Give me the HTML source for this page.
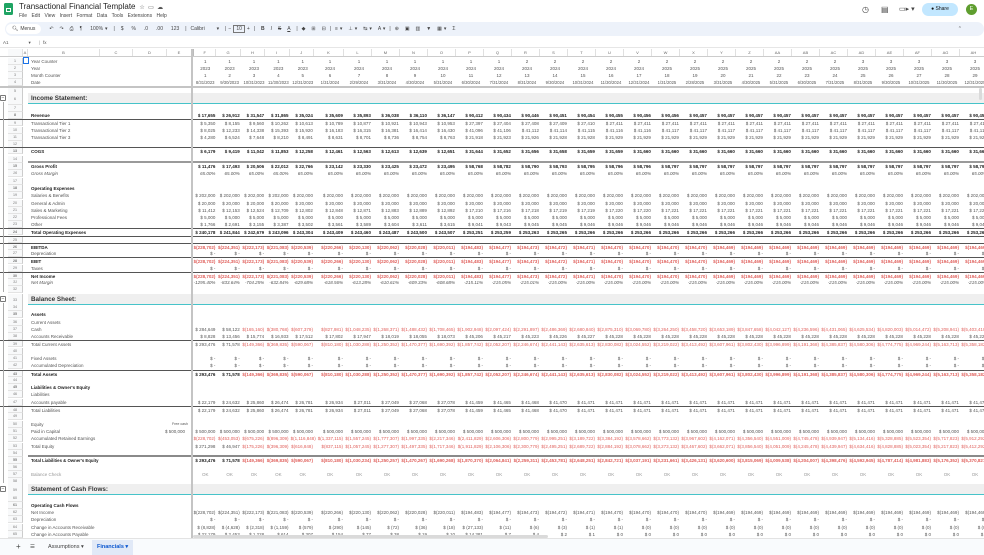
<!DOCTYPE html>
<html><head><meta charset="utf-8"><style>
*{margin:0;padding:0;box-sizing:border-box}
body{width:984px;height:555px;overflow:hidden;background:#fff;font-family:"Liberation Sans",Arial,sans-serif;color:#3c3c3c;position:relative}
.abs{position:absolute}
.title{left:19px;top:2px;font-size:8px;color:#1f1f1f}
.menu{left:19px;top:13px;font-size:5px;color:#444;word-spacing:3px}
.tb{left:5px;top:22px;width:979px;height:14px;background:#edf2fa;border-radius:7px;font-size:5px;color:#444;line-height:14px;white-space:nowrap;word-spacing:0.6px}
.fb{left:0;top:38px;width:984px;height:10px;font-size:4.5px;color:#555;line-height:10px;border-bottom:1px solid #e6e6e6}
.ch{top:49px;left:0;width:984px;height:8px;border-bottom:1px solid #ccc;background:#fff;font-size:4px;color:#666;line-height:8px;white-space:nowrap;display:flex}
.ch span{border-right:1px solid #e0e0e0;text-align:center;flex:none}
.r{position:absolute;left:0;width:984px;height:7px;font-size:4.5px;line-height:7px;color:#555;white-space:nowrap}
.n{position:absolute;left:8px;width:15px;height:100%;text-align:center;color:#777;font-size:3.6px;background:#f8f9fa;border-bottom:1px solid #e3e3e3;border-right:1px solid #ccc}
.l{position:absolute;left:31px}
.v{position:absolute;left:193px}
.v b{display:inline-block;width:28px;text-align:right;font-weight:inherit;padding-right:2px}
.v b:nth-child(-n+5){width:24.4px}
.v b:nth-child(6){width:30px}
.c b{text-align:center;padding-right:0}
.bd{font-weight:bold;color:#222}
.it{font-style:italic}
.red .v{color:#e0605c}
.rd{color:#e0605c}
.tl{border-top:1px solid #555}
.hd{height:12px;line-height:12px}
.hdbg{position:absolute;left:28px;width:956px;height:11px;background:#efefef;border-bottom:1.5px solid #46c3c9}
.hd .l{font-size:6.3px;font-weight:bold;color:#333;left:31px}
.hd .n{line-height:12px}
.tabbar{left:0;top:538px;width:984px;height:17px;background:#f9fbfd;border-top:1px solid #e3e3e3;font-size:5.5px;color:#444;line-height:16px}
</style></head><body>
<div class="abs" style="left:4px;top:3px;width:9px;height:12px;background:#1fa463;border-radius:1.5px"><div style="position:absolute;left:2px;top:5px;width:5px;height:4px;border:1px solid #fff"></div></div>
<div class="abs title">Transactional Financial Template <span style="font-size:6px;color:#555">&nbsp;☆ &nbsp;▭ &nbsp;☁</span></div>
<div class="abs menu">File Edit View Insert Format Data Tools Extensions Help</div>
<div class="abs" style="left:862px;top:5px;font-size:8px;color:#444">◷</div>
<div class="abs" style="left:881px;top:5px;font-size:8px;color:#444">▤</div>
<div class="abs" style="left:899px;top:5px;font-size:7px;color:#444">▭▸ ▾</div>
<div class="abs" style="left:922px;top:3px;width:36px;height:13px;background:#c2e7ff;border-radius:7px;font-size:5px;line-height:13px;color:#111;text-align:center">● Share</div>
<div class="abs" style="left:966px;top:4px;width:11px;height:11px;background:#5f9e2f;border-radius:50%;color:#fff;font-size:5.5px;text-align:center;line-height:11px">E</div>
<div class="abs tb"><span style="margin-left:1px;background:#fff;border-radius:6px;padding:2px 6px">🔍︎ Menus</span>&nbsp;&nbsp;&nbsp; ↶ &nbsp;&nbsp;↷ &nbsp;&nbsp;⎙ &nbsp;&nbsp;¶ &nbsp;&nbsp; 100% ▾ &nbsp;&nbsp;| &nbsp;&nbsp;$ &nbsp;&nbsp; % &nbsp;&nbsp; .0 &nbsp;&nbsp; .00 &nbsp;&nbsp; 123 &nbsp;&nbsp;| &nbsp;Calibri &nbsp;&nbsp;&nbsp;&nbsp;&nbsp;▾ &nbsp;&nbsp;| − <span style="border:1px solid #777;padding:0 2px">10</span> + &nbsp;| &nbsp;&nbsp;<b>B</b> &nbsp;&nbsp;<i>I</i> &nbsp;&nbsp;<s>S</s> &nbsp;&nbsp;<u>A</u> &nbsp;&nbsp;| &nbsp;◆ &nbsp;&nbsp;⊞ &nbsp;&nbsp;⊟ &nbsp;| &nbsp;≡ ▾ &nbsp;&nbsp;⊥ ▾ &nbsp;&nbsp;↹ ▾ &nbsp;&nbsp;A ▾ &nbsp;| &nbsp;⊕ &nbsp;&nbsp;▣ &nbsp;&nbsp;▥ &nbsp;&nbsp;▼ &nbsp;&nbsp;▦ ▾ &nbsp;&nbsp;Σ<span style="position:absolute;right:22px">⌃</span></div>
<div class="abs fb"><span style="margin-left:3px">A1</span><span style="margin-left:20px">▾</span><span style="margin-left:8px;color:#999">|</span><span style="margin-left:3px">fx</span></div>
<div class="abs ch"><span style="width:8px;border:0"></span><span style="width:15px;background:#f8f9fa"></span><span style="width:5px">A</span><span style="width:72px">B</span><span style="width:33px">C</span><span style="width:34px">D</span><span style="width:25px">E</span><span style="width:24.4px;border-left:2px solid #bbb">F</span><span style="width:24.4px">G</span><span style="width:24.4px">H</span><span style="width:24.4px">I</span><span style="width:24.4px">J</span><span style="width:30px">K</span><span style="width:28px">L</span><span style="width:28px">M</span><span style="width:28px">N</span><span style="width:28px">O</span><span style="width:28px">P</span><span style="width:28px">Q</span><span style="width:28px">R</span><span style="width:28px">S</span><span style="width:28px">T</span><span style="width:28px">U</span><span style="width:28px">V</span><span style="width:28px">W</span><span style="width:28px">X</span><span style="width:28px">Y</span><span style="width:28px">Z</span><span style="width:28px">AA</span><span style="width:28px">AB</span><span style="width:28px">AC</span><span style="width:28px">AD</span><span style="width:28px">AE</span><span style="width:28px">AF</span><span style="width:28px">AG</span><span style="width:28px">AH</span></div>

<div class="r" style="top:57.5px"><span class="n">1</span><span class="l">Year Counter</span><span class="v c"><b>1</b><b>1</b><b>1</b><b>1</b><b>1</b><b>1</b><b>1</b><b>1</b><b>1</b><b>1</b><b>1</b><b>1</b><b>2</b><b>2</b><b>2</b><b>2</b><b>2</b><b>2</b><b>2</b><b>2</b><b>2</b><b>2</b><b>2</b><b>2</b><b>3</b><b>3</b><b>3</b><b>3</b><b>3</b></span></div>
<div class="r" style="top:64.5px"><span class="n">2</span><span class="l">Year</span><span class="v c"><b>2023</b><b>2023</b><b>2023</b><b>2023</b><b>2023</b><b>2024</b><b>2024</b><b>2024</b><b>2024</b><b>2024</b><b>2024</b><b>2024</b><b>2024</b><b>2024</b><b>2024</b><b>2024</b><b>2024</b><b>2025</b><b>2025</b><b>2025</b><b>2025</b><b>2025</b><b>2025</b><b>2025</b><b>2025</b><b>2025</b><b>2025</b><b>2025</b><b>2025</b></span></div>
<div class="r" style="top:71.5px"><span class="n">3</span><span class="l">Month Counter</span><span class="v c"><b>1</b><b>2</b><b>3</b><b>4</b><b>5</b><b>6</b><b>7</b><b>8</b><b>9</b><b>10</b><b>11</b><b>12</b><b>13</b><b>14</b><b>15</b><b>16</b><b>17</b><b>18</b><b>19</b><b>20</b><b>21</b><b>22</b><b>23</b><b>24</b><b>25</b><b>26</b><b>27</b><b>28</b><b>29</b></span></div>
<div class="r" style="top:78.5px"><span class="n">4</span><span class="l">Date</span><span class="v c" style="font-size:4.2px"><b>8/31/2023</b><b>9/30/2023</b><b>10/31/2023</b><b>11/30/2023</b><b>12/31/2023</b><b>1/31/2024</b><b>2/29/2024</b><b>3/31/2024</b><b>4/30/2024</b><b>5/31/2024</b><b>6/30/2024</b><b>7/31/2024</b><b>8/31/2024</b><b>9/30/2024</b><b>10/31/2024</b><b>11/30/2024</b><b>12/31/2024</b><b>1/31/2025</b><b>2/28/2025</b><b>3/31/2025</b><b>4/30/2025</b><b>5/31/2025</b><b>6/30/2025</b><b>7/31/2025</b><b>8/31/2025</b><b>9/30/2025</b><b>10/31/2025</b><b>11/30/2025</b><b>12/31/2025</b></span></div>
<div class="abs" style="left:0;top:85.5px;width:984px;height:2px;background:#c4c4c4"></div>

<div class="r" style="top:87.5px"><span class="n">5</span></div>
<div class="hdbg" style="top:93px"></div>
<div class="r hd" style="top:93px"><span class="n">6</span><span class="l">Income Statement:</span></div>
<div class="r" style="top:105px"><span class="n">7</span></div>
<div class="r bd" style="top:112.3px"><span class="n">8</span><span class="l">Revenue</span><span class="v"><b>$ 17,655</b><b>$ 26,912</b><b>$ 31,547</b><b>$ 31,865</b><b>$ 35,024</b><b>$ 35,609</b><b>$ 35,893</b><b>$ 36,038</b><b>$ 36,110</b><b>$ 36,147</b><b>$ 90,412</b><b>$ 90,434</b><b>$ 90,446</b><b>$ 90,451</b><b>$ 90,454</b><b>$ 90,455</b><b>$ 90,456</b><b>$ 90,456</b><b>$ 90,457</b><b>$ 90,457</b><b>$ 90,457</b><b>$ 90,457</b><b>$ 90,457</b><b>$ 90,457</b><b>$ 90,457</b><b>$ 90,457</b><b>$ 90,457</b><b>$ 90,457</b><b>$ 90,457</b></span></div>
<div class="r tl" style="top:119.2px"><span class="n">9</span><span class="l">Transactional Tier 1</span><span class="v"><b>$ 5,350</b><b>$ 8,155</b><b>$ 9,560</b><b>$ 10,262</b><b>$ 10,613</b><b>$ 10,789</b><b>$ 10,877</b><b>$ 10,921</b><b>$ 10,943</b><b>$ 10,953</b><b>$ 27,397</b><b>$ 27,404</b><b>$ 27,408</b><b>$ 27,409</b><b>$ 27,410</b><b>$ 27,411</b><b>$ 27,411</b><b>$ 27,411</b><b>$ 27,411</b><b>$ 27,411</b><b>$ 27,411</b><b>$ 27,411</b><b>$ 27,411</b><b>$ 27,411</b><b>$ 27,411</b><b>$ 27,411</b><b>$ 27,411</b><b>$ 27,411</b><b>$ 27,411</b></span></div>
<div class="r" style="top:126.5px"><span class="n">10</span><span class="l">Transactional Tier 2</span><span class="v"><b>$ 8,025</b><b>$ 12,233</b><b>$ 14,338</b><b>$ 15,393</b><b>$ 15,920</b><b>$ 16,183</b><b>$ 16,315</b><b>$ 16,381</b><b>$ 16,414</b><b>$ 16,430</b><b>$ 41,096</b><b>$ 41,106</b><b>$ 41,112</b><b>$ 41,114</b><b>$ 41,115</b><b>$ 41,116</b><b>$ 41,116</b><b>$ 41,117</b><b>$ 41,117</b><b>$ 41,117</b><b>$ 41,117</b><b>$ 41,117</b><b>$ 41,117</b><b>$ 41,117</b><b>$ 41,117</b><b>$ 41,117</b><b>$ 41,117</b><b>$ 41,117</b><b>$ 41,117</b></span></div>
<div class="r" style="top:133.8px"><span class="n">11</span><span class="l">Transactional Tier 3</span><span class="v"><b>$ 4,280</b><b>$ 6,524</b><b>$ 7,648</b><b>$ 8,210</b><b>$ 8,491</b><b>$ 8,631</b><b>$ 8,701</b><b>$ 8,736</b><b>$ 8,754</b><b>$ 8,763</b><b>$ 21,918</b><b>$ 21,923</b><b>$ 21,926</b><b>$ 21,928</b><b>$ 21,928</b><b>$ 21,929</b><b>$ 21,929</b><b>$ 21,929</b><b>$ 21,929</b><b>$ 21,929</b><b>$ 21,929</b><b>$ 21,929</b><b>$ 21,929</b><b>$ 21,929</b><b>$ 21,929</b><b>$ 21,929</b><b>$ 21,929</b><b>$ 21,929</b><b>$ 21,929</b></span></div>
<div class="r" style="top:141.1px"><span class="n">12</span></div>
<div class="r bd tl" style="top:147.4px"><span class="n">13</span><span class="l">COGS</span><span class="v"><b>$ 6,179</b><b>$ 9,419</b><b>$ 11,042</b><b>$ 11,853</b><b>$ 12,258</b><b>$ 12,461</b><b>$ 12,563</b><b>$ 12,613</b><b>$ 12,639</b><b>$ 12,651</b><b>$ 31,644</b><b>$ 31,652</b><b>$ 31,656</b><b>$ 31,658</b><b>$ 31,659</b><b>$ 31,659</b><b>$ 31,660</b><b>$ 31,660</b><b>$ 31,660</b><b>$ 31,660</b><b>$ 31,660</b><b>$ 31,660</b><b>$ 31,660</b><b>$ 31,660</b><b>$ 31,660</b><b>$ 31,660</b><b>$ 31,660</b><b>$ 31,660</b><b>$ 31,660</b></span></div>
<div class="r" style="top:155.7px"><span class="n">14</span></div>
<div class="abs" style="left:28px;top:161px;width:956px;height:2px;background:#9a9a9a"></div>
<div class="r bd" style="top:163px"><span class="n">15</span><span class="l">Gross Profit</span><span class="v"><b>$ 11,476</b><b>$ 17,493</b><b>$ 20,506</b><b>$ 22,012</b><b>$ 22,766</b><b>$ 23,142</b><b>$ 23,330</b><b>$ 23,425</b><b>$ 23,472</b><b>$ 23,495</b><b>$ 58,768</b><b>$ 58,782</b><b>$ 58,790</b><b>$ 58,793</b><b>$ 58,795</b><b>$ 58,796</b><b>$ 58,796</b><b>$ 58,797</b><b>$ 58,797</b><b>$ 58,797</b><b>$ 58,797</b><b>$ 58,797</b><b>$ 58,797</b><b>$ 58,797</b><b>$ 58,797</b><b>$ 58,797</b><b>$ 58,797</b><b>$ 58,797</b><b>$ 58,797</b></span></div>
<div class="r it" style="top:170.3px"><span class="n">16</span><span class="l">Gross Margin</span><span class="v"><b>65.00%</b><b>65.00%</b><b>65.00%</b><b>65.00%</b><b>65.00%</b><b>65.00%</b><b>65.00%</b><b>65.00%</b><b>65.00%</b><b>65.00%</b><b>65.00%</b><b>65.00%</b><b>65.00%</b><b>65.00%</b><b>65.00%</b><b>65.00%</b><b>65.00%</b><b>65.00%</b><b>65.00%</b><b>65.00%</b><b>65.00%</b><b>65.00%</b><b>65.00%</b><b>65.00%</b><b>65.00%</b><b>65.00%</b><b>65.00%</b><b>65.00%</b><b>65.00%</b></span></div>
<div class="r" style="top:177.6px"><span class="n">17</span></div>
<div class="r bd" style="top:184.9px"><span class="n">18</span><span class="l">Operating Expenses</span></div>
<div class="r" style="top:192.2px"><span class="n">19</span><span class="l">Salaries &amp; Benefits</span><span class="v"><b>$ 202,000</b><b>$ 202,000</b><b>$ 202,000</b><b>$ 202,000</b><b>$ 202,000</b><b>$ 202,000</b><b>$ 202,000</b><b>$ 202,000</b><b>$ 202,000</b><b>$ 202,000</b><b>$ 202,000</b><b>$ 202,000</b><b>$ 202,000</b><b>$ 202,000</b><b>$ 202,000</b><b>$ 202,000</b><b>$ 202,000</b><b>$ 202,000</b><b>$ 202,000</b><b>$ 202,000</b><b>$ 202,000</b><b>$ 202,000</b><b>$ 202,000</b><b>$ 202,000</b><b>$ 202,000</b><b>$ 202,000</b><b>$ 202,000</b><b>$ 202,000</b><b>$ 202,000</b></span></div>
<div class="r" style="top:199.5px"><span class="n">20</span><span class="l">General &amp; Admin</span><span class="v"><b>$ 20,000</b><b>$ 20,000</b><b>$ 20,000</b><b>$ 20,000</b><b>$ 20,000</b><b>$ 20,000</b><b>$ 20,000</b><b>$ 20,000</b><b>$ 20,000</b><b>$ 20,000</b><b>$ 20,000</b><b>$ 20,000</b><b>$ 20,000</b><b>$ 20,000</b><b>$ 20,000</b><b>$ 20,000</b><b>$ 20,000</b><b>$ 20,000</b><b>$ 20,000</b><b>$ 20,000</b><b>$ 20,000</b><b>$ 20,000</b><b>$ 20,000</b><b>$ 20,000</b><b>$ 20,000</b><b>$ 20,000</b><b>$ 20,000</b><b>$ 20,000</b><b>$ 20,000</b></span></div>
<div class="r" style="top:206.8px"><span class="n">21</span><span class="l">Sales &amp; Marketing</span><span class="v"><b>$ 11,412</b><b>$ 12,153</b><b>$ 12,524</b><b>$ 12,709</b><b>$ 12,802</b><b>$ 12,848</b><b>$ 12,871</b><b>$ 12,883</b><b>$ 12,889</b><b>$ 12,892</b><b>$ 17,210</b><b>$ 17,216</b><b>$ 17,218</b><b>$ 17,219</b><b>$ 17,219</b><b>$ 17,220</b><b>$ 17,220</b><b>$ 17,221</b><b>$ 17,221</b><b>$ 17,221</b><b>$ 17,221</b><b>$ 17,221</b><b>$ 17,221</b><b>$ 17,221</b><b>$ 17,221</b><b>$ 17,221</b><b>$ 17,221</b><b>$ 17,221</b><b>$ 17,221</b></span></div>
<div class="r" style="top:214.1px"><span class="n">22</span><span class="l">Professional Fees</span><span class="v"><b>$ 5,000</b><b>$ 5,000</b><b>$ 5,000</b><b>$ 5,000</b><b>$ 5,000</b><b>$ 5,000</b><b>$ 5,000</b><b>$ 5,000</b><b>$ 5,000</b><b>$ 5,000</b><b>$ 5,000</b><b>$ 5,000</b><b>$ 5,000</b><b>$ 5,000</b><b>$ 5,000</b><b>$ 5,000</b><b>$ 5,000</b><b>$ 5,000</b><b>$ 5,000</b><b>$ 5,000</b><b>$ 5,000</b><b>$ 5,000</b><b>$ 5,000</b><b>$ 5,000</b><b>$ 5,000</b><b>$ 5,000</b><b>$ 5,000</b><b>$ 5,000</b><b>$ 5,000</b></span></div>
<div class="r" style="top:221.4px"><span class="n">23</span><span class="l">Other</span><span class="v"><b>$ 1,766</b><b>$ 2,691</b><b>$ 3,155</b><b>$ 3,387</b><b>$ 3,502</b><b>$ 3,561</b><b>$ 3,589</b><b>$ 3,604</b><b>$ 3,611</b><b>$ 3,615</b><b>$ 9,041</b><b>$ 9,043</b><b>$ 9,045</b><b>$ 9,045</b><b>$ 9,046</b><b>$ 9,046</b><b>$ 9,046</b><b>$ 9,046</b><b>$ 9,046</b><b>$ 9,046</b><b>$ 9,046</b><b>$ 9,046</b><b>$ 9,046</b><b>$ 9,046</b><b>$ 9,046</b><b>$ 9,046</b><b>$ 9,046</b><b>$ 9,046</b><b>$ 9,046</b></span></div>
<div class="r bd tl" style="top:228.2px"><span class="n">24</span><span class="l">Total Operating Expenses</span><span class="v"><b>$ 240,178</b><b>$ 241,844</b><b>$ 242,679</b><b>$ 243,096</b><b>$ 243,304</b><b>$ 243,409</b><b>$ 243,460</b><b>$ 243,487</b><b>$ 243,500</b><b>$ 243,507</b><b>$ 253,251</b><b>$ 253,259</b><b>$ 253,263</b><b>$ 253,265</b><b>$ 253,266</b><b>$ 253,266</b><b>$ 253,266</b><b>$ 253,266</b><b>$ 253,266</b><b>$ 253,266</b><b>$ 253,266</b><b>$ 253,266</b><b>$ 253,266</b><b>$ 253,266</b><b>$ 253,266</b><b>$ 253,266</b><b>$ 253,266</b><b>$ 253,266</b><b>$ 253,266</b></span></div>
<div class="r tl" style="top:235.6px"><span class="n">25</span></div>
<div class="r bd red tl" style="top:242.6px"><span class="n">26</span><span class="l">EBITDA</span><span class="v"><b>$(228,702)</b><b>$(224,351)</b><b>$(222,173)</b><b>$(221,083)</b><b>$(220,539)</b><b>$(220,266)</b><b>$(220,130)</b><b>$(220,062)</b><b>$(220,028)</b><b>$(220,011)</b><b>$(194,483)</b><b>$(194,477)</b><b>$(194,473)</b><b>$(194,472)</b><b>$(194,471)</b><b>$(194,470)</b><b>$(194,470)</b><b>$(194,470)</b><b>$(194,470)</b><b>$(194,469)</b><b>$(194,469)</b><b>$(194,469)</b><b>$(194,469)</b><b>$(194,469)</b><b>$(194,469)</b><b>$(194,469)</b><b>$(194,469)</b><b>$(194,469)</b><b>$(194,469)</b></span></div>
<div class="r" style="top:249.9px"><span class="n">27</span><span class="l">Depreciation</span><span class="v"><b>$ -</b><b>$ -</b><b>$ -</b><b>$ -</b><b>$ -</b><b>$ -</b><b>$ -</b><b>$ -</b><b>$ -</b><b>$ -</b><b>$ -</b><b>$ -</b><b>$ -</b><b>$ -</b><b>$ -</b><b>$ -</b><b>$ -</b><b>$ -</b><b>$ -</b><b>$ -</b><b>$ -</b><b>$ -</b><b>$ -</b><b>$ -</b><b>$ -</b><b>$ -</b><b>$ -</b><b>$ -</b><b>$ -</b></span></div>
<div class="r bd red tl" style="top:257.2px"><span class="n">28</span><span class="l">EBIT</span><span class="v"><b>$(228,702)</b><b>$(224,351)</b><b>$(222,173)</b><b>$(221,083)</b><b>$(220,539)</b><b>$(220,266)</b><b>$(220,130)</b><b>$(220,062)</b><b>$(220,028)</b><b>$(220,011)</b><b>$(194,483)</b><b>$(194,477)</b><b>$(194,473)</b><b>$(194,472)</b><b>$(194,471)</b><b>$(194,470)</b><b>$(194,470)</b><b>$(194,470)</b><b>$(194,470)</b><b>$(194,469)</b><b>$(194,469)</b><b>$(194,469)</b><b>$(194,469)</b><b>$(194,469)</b><b>$(194,469)</b><b>$(194,469)</b><b>$(194,469)</b><b>$(194,469)</b><b>$(194,469)</b></span></div>
<div class="r" style="top:264.5px"><span class="n">29</span><span class="l">Taxes</span><span class="v"><b>$ -</b><b>$ -</b><b>$ -</b><b>$ -</b><b>$ -</b><b>$ -</b><b>$ -</b><b>$ -</b><b>$ -</b><b>$ -</b><b>$ -</b><b>$ -</b><b>$ -</b><b>$ -</b><b>$ -</b><b>$ -</b><b>$ -</b><b>$ -</b><b>$ -</b><b>$ -</b><b>$ -</b><b>$ -</b><b>$ -</b><b>$ -</b><b>$ -</b><b>$ -</b><b>$ -</b><b>$ -</b><b>$ -</b></span></div>
<div class="r bd red tl" style="top:271.8px"><span class="n">30</span><span class="l">Net Income</span><span class="v"><b>$(228,702)</b><b>$(224,351)</b><b>$(222,173)</b><b>$(221,083)</b><b>$(220,539)</b><b>$(220,266)</b><b>$(220,130)</b><b>$(220,062)</b><b>$(220,028)</b><b>$(220,011)</b><b>$(194,483)</b><b>$(194,477)</b><b>$(194,473)</b><b>$(194,472)</b><b>$(194,471)</b><b>$(194,470)</b><b>$(194,470)</b><b>$(194,470)</b><b>$(194,470)</b><b>$(194,469)</b><b>$(194,469)</b><b>$(194,469)</b><b>$(194,469)</b><b>$(194,469)</b><b>$(194,469)</b><b>$(194,469)</b><b>$(194,469)</b><b>$(194,469)</b><b>$(194,469)</b></span></div>
<div class="r it" style="top:279.1px"><span class="n">31</span><span class="l">Net Margin</span><span class="v"><b>-1295.40%</b><b>-833.64%</b><b>-704.25%</b><b>-632.84%</b><b>-629.68%</b><b>-618.56%</b><b>-613.28%</b><b>-610.61%</b><b>-609.33%</b><b>-608.68%</b><b>-215.11%</b><b>-215.05%</b><b>-215.01%</b><b>-215.00%</b><b>-215.00%</b><b>-215.00%</b><b>-215.00%</b><b>-215.00%</b><b>-215.00%</b><b>-215.00%</b><b>-215.00%</b><b>-215.00%</b><b>-215.00%</b><b>-215.00%</b><b>-215.00%</b><b>-215.00%</b><b>-215.00%</b><b>-215.00%</b><b>-215.00%</b></span></div>
<div class="r" style="top:286.4px"><span class="n">32</span></div>

<div class="hdbg" style="top:293.5px"></div>
<div class="r hd" style="top:293.5px"><span class="n">33</span><span class="l">Balance Sheet:</span></div>
<div class="r" style="top:304px"><span class="n">34</span></div>
<div class="r bd" style="top:311.3px"><span class="n">35</span><span class="l">Assets</span></div>
<div class="r" style="top:318.5px"><span class="n">36</span><span class="l">Current Assets</span></div>
<div class="r" style="top:325.8px"><span class="n">37</span><span class="l">Cash</span><span class="v"><b>$ 284,649</b><b>$ 58,122</b><b class="rd">$(165,160)</b><b class="rd">$(380,768)</b><b class="rd">$(607,379)</b><b class="rd">$(827,981)</b><b class="rd">$(1,048,235)</b><b class="rd">$(1,268,371)</b><b class="rd">$(1,488,432)</b><b class="rd">$(1,708,465)</b><b class="rd">$(1,902,948)</b><b class="rd">$(2,097,424)</b><b class="rd">$(2,291,897)</b><b class="rd">$(2,486,369)</b><b class="rd">$(2,680,840)</b><b class="rd">$(2,875,310)</b><b class="rd">$(3,069,780)</b><b class="rd">$(3,264,250)</b><b class="rd">$(3,458,720)</b><b class="rd">$(3,653,189)</b><b class="rd">$(3,847,658)</b><b class="rd">$(4,042,127)</b><b class="rd">$(4,236,596)</b><b class="rd">$(4,431,065)</b><b class="rd">$(4,625,534)</b><b class="rd">$(4,820,003)</b><b class="rd">$(5,014,472)</b><b class="rd">$(5,208,941)</b><b class="rd">$(5,403,410)</b></span></div>
<div class="r" style="top:333px"><span class="n">38</span><span class="l">Accounts Receivable</span><span class="v"><b>$ 8,828</b><b>$ 13,456</b><b>$ 15,774</b><b>$ 16,933</b><b>$ 17,512</b><b>$ 17,802</b><b>$ 17,947</b><b>$ 18,019</b><b>$ 18,055</b><b>$ 18,073</b><b>$ 45,206</b><b>$ 45,217</b><b>$ 45,223</b><b>$ 45,226</b><b>$ 45,227</b><b>$ 45,228</b><b>$ 45,228</b><b>$ 45,228</b><b>$ 45,228</b><b>$ 45,228</b><b>$ 45,228</b><b>$ 45,228</b><b>$ 45,228</b><b>$ 45,228</b><b>$ 45,228</b><b>$ 45,228</b><b>$ 45,228</b><b>$ 45,228</b><b>$ 45,228</b></span></div>
<div class="r tl red" style="top:340.3px"><span class="n">39</span><span class="l">Total Current Assets</span><span class="v"><b style="color:#555">$ 293,476</b><b style="color:#555">$ 71,578</b><b>$(149,366)</b><b>$(369,835)</b><b>$(590,067)</b><b>$(810,180)</b><b>$(1,030,288)</b><b>$(1,250,352)</b><b>$(1,470,377)</b><b>$(1,690,392)</b><b>$(1,857,742)</b><b>$(2,052,207)</b><b>$(2,246,674)</b><b>$(2,441,143)</b><b>$(2,635,613)</b><b>$(2,830,082)</b><b>$(3,024,552)</b><b>$(3,219,022)</b><b>$(3,413,492)</b><b>$(3,607,961)</b><b>$(3,802,430)</b><b>$(3,996,899)</b><b>$(4,191,368)</b><b>$(4,385,837)</b><b>$(4,580,306)</b><b>$(4,774,775)</b><b>$(4,969,244)</b><b>$(5,163,713)</b><b>$(5,358,182)</b></span></div>
<div class="r" style="top:347.6px"><span class="n">40</span></div>
<div class="r" style="top:354.9px"><span class="n">41</span><span class="l">Fixed Assets</span><span class="v"><b>$ -</b><b>$ -</b><b>$ -</b><b>$ -</b><b>$ -</b><b>$ -</b><b>$ -</b><b>$ -</b><b>$ -</b><b>$ -</b><b>$ -</b><b>$ -</b><b>$ -</b><b>$ -</b><b>$ -</b><b>$ -</b><b>$ -</b><b>$ -</b><b>$ -</b><b>$ -</b><b>$ -</b><b>$ -</b><b>$ -</b><b>$ -</b><b>$ -</b><b>$ -</b><b>$ -</b><b>$ -</b><b>$ -</b></span></div>
<div class="r" style="top:362.2px"><span class="n">42</span><span class="l">Accumulated Depreciation</span><span class="v"><b>$ -</b><b>$ -</b><b>$ -</b><b>$ -</b><b>$ -</b><b>$ -</b><b>$ -</b><b>$ -</b><b>$ -</b><b>$ -</b><b>$ -</b><b>$ -</b><b>$ -</b><b>$ -</b><b>$ -</b><b>$ -</b><b>$ -</b><b>$ -</b><b>$ -</b><b>$ -</b><b>$ -</b><b>$ -</b><b>$ -</b><b>$ -</b><b>$ -</b><b>$ -</b><b>$ -</b><b>$ -</b><b>$ -</b></span></div>
<div class="r bd tl red" style="top:369.5px"><span class="n">43</span><span class="l">Total Assets</span><span class="v"><b style="color:#222">$ 293,476</b><b style="color:#222">$ 71,578</b><b>$(149,366)</b><b>$(369,835)</b><b>$(590,067)</b><b>$(810,180)</b><b>$(1,030,288)</b><b>$(1,250,352)</b><b>$(1,470,377)</b><b>$(1,690,392)</b><b>$(1,857,742)</b><b>$(2,052,207)</b><b>$(2,246,674)</b><b>$(2,441,143)</b><b>$(2,635,613)</b><b>$(2,830,082)</b><b>$(3,024,552)</b><b>$(3,219,022)</b><b>$(3,413,492)</b><b>$(3,607,961)</b><b>$(3,802,430)</b><b>$(3,996,899)</b><b>$(4,191,368)</b><b>$(4,385,837)</b><b>$(4,580,306)</b><b>$(4,774,775)</b><b>$(4,969,244)</b><b>$(5,163,713)</b><b>$(5,358,182)</b></span></div>
<div class="r" style="top:376.8px"><span class="n">44</span></div>
<div class="r bd" style="top:384.1px"><span class="n">45</span><span class="l">Liabilities &amp; Owner's Equity</span></div>
<div class="r" style="top:391.4px"><span class="n">46</span><span class="l">Liabilities</span></div>
<div class="r" style="top:398.7px"><span class="n">47</span><span class="l">Accounts payable</span><span class="v"><b>$ 22,179</b><b>$ 24,632</b><b>$ 25,860</b><b>$ 26,474</b><b>$ 26,781</b><b>$ 26,934</b><b>$ 27,011</b><b>$ 27,049</b><b>$ 27,068</b><b>$ 27,078</b><b>$ 41,459</b><b>$ 41,465</b><b>$ 41,468</b><b>$ 41,470</b><b>$ 41,471</b><b>$ 41,471</b><b>$ 41,471</b><b>$ 41,471</b><b>$ 41,471</b><b>$ 41,471</b><b>$ 41,471</b><b>$ 41,471</b><b>$ 41,471</b><b>$ 41,471</b><b>$ 41,471</b><b>$ 41,471</b><b>$ 41,471</b><b>$ 41,471</b><b>$ 41,471</b></span></div>
<div class="r tl" style="top:406px"><span class="n">48</span><span class="l">Total Liabilities</span><span class="v"><b>$ 22,179</b><b>$ 24,632</b><b>$ 25,860</b><b>$ 26,474</b><b>$ 26,781</b><b>$ 26,934</b><b>$ 27,011</b><b>$ 27,049</b><b>$ 27,068</b><b>$ 27,078</b><b>$ 41,459</b><b>$ 41,465</b><b>$ 41,468</b><b>$ 41,470</b><b>$ 41,471</b><b>$ 41,471</b><b>$ 41,471</b><b>$ 41,471</b><b>$ 41,471</b><b>$ 41,471</b><b>$ 41,471</b><b>$ 41,471</b><b>$ 41,471</b><b>$ 41,471</b><b>$ 41,471</b><b>$ 41,471</b><b>$ 41,471</b><b>$ 41,471</b><b>$ 41,471</b></span></div>
<div class="r" style="top:413.3px"><span class="n">49</span></div>
<div class="r" style="top:420.6px"><span class="n">50</span><span class="l">Equity</span><span style="position:absolute;left:172px;font-size:3.6px">Free cash</span></div>
<div class="r" style="top:427.9px"><span class="n">51</span><span class="l">Paid in Capital</span><span style="position:absolute;left:165px">$ 500,000</span><span class="v"><b>$ 500,000</b><b>$ 500,000</b><b>$ 500,000</b><b>$ 500,000</b><b>$ 500,000</b><b>$ 500,000</b><b>$ 500,000</b><b>$ 500,000</b><b>$ 500,000</b><b>$ 500,000</b><b>$ 500,000</b><b>$ 500,000</b><b>$ 500,000</b><b>$ 500,000</b><b>$ 500,000</b><b>$ 500,000</b><b>$ 500,000</b><b>$ 500,000</b><b>$ 500,000</b><b>$ 500,000</b><b>$ 500,000</b><b>$ 500,000</b><b>$ 500,000</b><b>$ 500,000</b><b>$ 500,000</b><b>$ 500,000</b><b>$ 500,000</b><b>$ 500,000</b><b>$ 500,000</b></span></div>
<div class="r red" style="top:435.2px"><span class="n">52</span><span class="l">Accumulated Retained Earnings</span><span class="v"><b>$(228,702)</b><b>$(453,053)</b><b>$(675,226)</b><b>$(896,309)</b><b>$(1,116,848)</b><b>$(1,337,115)</b><b>$(1,557,245)</b><b>$(1,777,307)</b><b>$(1,997,335)</b><b>$(2,217,346)</b><b>$(2,411,829)</b><b>$(2,606,306)</b><b>$(2,800,779)</b><b>$(2,995,251)</b><b>$(3,189,722)</b><b>$(3,384,192)</b><b>$(3,578,662)</b><b>$(3,773,132)</b><b>$(3,967,602)</b><b>$(4,162,071)</b><b>$(4,356,540)</b><b>$(4,551,009)</b><b>$(4,745,478)</b><b>$(4,939,947)</b><b>$(5,134,416)</b><b>$(5,328,885)</b><b>$(5,523,354)</b><b>$(5,717,823)</b><b>$(5,912,292)</b></span></div>
<div class="r red" style="top:442.5px"><span class="n">53</span><span class="l">Total Equity</span><span class="v"><b style="color:#555">$ 271,298</b><b style="color:#555">$ 46,947</b><b>$(175,226)</b><b>$(396,309)</b><b>$(616,848)</b><b>$(837,115)</b><b>$(1,057,245)</b><b>$(1,277,307)</b><b>$(1,497,335)</b><b>$(1,717,346)</b><b>$(1,911,829)</b><b>$(2,106,306)</b><b>$(2,300,779)</b><b>$(2,495,251)</b><b>$(2,689,722)</b><b>$(2,884,192)</b><b>$(3,078,662)</b><b>$(3,273,132)</b><b>$(3,467,602)</b><b>$(3,662,071)</b><b>$(3,856,540)</b><b>$(4,051,009)</b><b>$(4,245,478)</b><b>$(4,439,947)</b><b>$(4,634,416)</b><b>$(4,828,885)</b><b>$(5,023,354)</b><b>$(5,217,823)</b><b>$(5,412,292)</b></span></div>
<div class="r" style="top:449.8px"><span class="n">54</span></div>
<div class="abs" style="left:28px;top:454.5px;width:956px;height:2px;background:#8a8a8a"></div>
<div class="r bd red" style="top:456.5px"><span class="n">55</span><span class="l" style="font-size:4.3px">Total Liabilities &amp; Owner's Equity</span><span class="v"><b style="color:#222">$ 293,476</b><b style="color:#222">$ 71,578</b><b>$(149,366)</b><b>$(369,835)</b><b>$(590,067)</b><b>$(810,180)</b><b>$(1,030,234)</b><b>$(1,250,257)</b><b>$(1,470,267)</b><b>$(1,690,268)</b><b>$(1,870,370)</b><b>$(2,064,841)</b><b>$(2,259,311)</b><b>$(2,453,781)</b><b>$(2,648,251)</b><b>$(2,842,721)</b><b>$(3,037,191)</b><b>$(3,231,661)</b><b>$(3,426,131)</b><b>$(3,620,600)</b><b>$(3,815,069)</b><b>$(4,009,538)</b><b>$(4,204,007)</b><b>$(4,398,476)</b><b>$(4,592,945)</b><b>$(4,787,414)</b><b>$(4,981,883)</b><b>$(5,176,352)</b><b>$(5,370,821)</b></span></div>
<div class="r" style="top:463.8px"><span class="n">56</span></div>
<div class="r" style="top:471.1px;color:#999"><span class="n">57</span><span class="l">Balance Check</span><span class="v c"><b>OK</b><b>OK</b><b>OK</b><b>OK</b><b>OK</b><b>OK</b><b>OK</b><b>OK</b><b>OK</b><b>OK</b><b>OK</b><b>OK</b><b>OK</b><b>OK</b><b>OK</b><b>OK</b><b>OK</b><b>OK</b><b>OK</b><b>OK</b><b>OK</b><b>OK</b><b>OK</b><b>OK</b><b>OK</b><b>OK</b><b>OK</b><b>OK</b><b>OK</b></span></div>
<div class="r" style="top:478.4px"><span class="n">58</span></div>

<div class="hdbg" style="top:484px"></div>
<div class="r hd" style="top:484px"><span class="n">59</span><span class="l">Statement of Cash Flows:</span></div>
<div class="r" style="top:494.5px"><span class="n">60</span></div>
<div class="r bd" style="top:501.6px"><span class="n">61</span><span class="l">Operating Cash Flows</span></div>
<div class="r" style="top:508.9px"><span class="n">62</span><span class="l">Net Income</span><span class="v"><b>$(228,702)</b><b>$(224,351)</b><b>$(222,173)</b><b>$(221,083)</b><b>$(220,539)</b><b>$(220,266)</b><b>$(220,130)</b><b>$(220,062)</b><b>$(220,028)</b><b>$(220,011)</b><b>$(194,483)</b><b>$(194,477)</b><b>$(194,473)</b><b>$(194,472)</b><b>$(194,471)</b><b>$(194,470)</b><b>$(194,470)</b><b>$(194,470)</b><b>$(194,470)</b><b>$(194,469)</b><b>$(194,469)</b><b>$(194,469)</b><b>$(194,469)</b><b>$(194,469)</b><b>$(194,469)</b><b>$(194,469)</b><b>$(194,469)</b><b>$(194,469)</b><b>$(194,469)</b></span></div>
<div class="r" style="top:516.2px"><span class="n">63</span><span class="l">Depreciation</span><span class="v"><b>$ -</b><b>$ -</b><b>$ -</b><b>$ -</b><b>$ -</b><b>$ -</b><b>$ -</b><b>$ -</b><b>$ -</b><b>$ -</b><b>$ -</b><b>$ -</b><b>$ -</b><b>$ -</b><b>$ -</b><b>$ -</b><b>$ -</b><b>$ -</b><b>$ -</b><b>$ -</b><b>$ -</b><b>$ -</b><b>$ -</b><b>$ -</b><b>$ -</b><b>$ -</b><b>$ -</b><b>$ -</b><b>$ -</b></span></div>
<div class="r" style="top:523.5px"><span class="n">64</span><span class="l">Change in Accounts Receivable</span><span class="v"><b>$ (8,828)</b><b>$ (4,628)</b><b>$ (2,318)</b><b>$ (1,159)</b><b>$ (579)</b><b>$ (290)</b><b>$ (145)</b><b>$ (72)</b><b>$ (36)</b><b>$ (18)</b><b>$ (27,133)</b><b>$ (11)</b><b>$ (6)</b><b>$ (3)</b><b>$ (1)</b><b>$ (1)</b><b>$ (0)</b><b>$ (0)</b><b>$ (0)</b><b>$ (0)</b><b>$ (0)</b><b>$ (0)</b><b>$ (0)</b><b>$ (0)</b><b>$ (0)</b><b>$ (0)</b><b>$ (0)</b><b>$ (0)</b><b>$ (0)</b></span></div>
<div class="r" style="top:530.8px"><span class="n">65</span><span class="l">Change in Accounts Payable</span><span class="v"><b>$ 22,179</b><b>$ 2,453</b><b>$ 1,228</b><b>$ 614</b><b>$ 307</b><b>$ 154</b><b>$ 77</b><b>$ 38</b><b>$ 19</b><b>$ 10</b><b>$ 14,381</b><b>$ 7</b><b>$ 4</b><b>$ 2</b><b>$ 1</b><b>$ 0</b><b>$ 0</b><b>$ 0</b><b>$ 0</b><b>$ 0</b><b>$ 0</b><b>$ 0</b><b>$ 0</b><b>$ 0</b><b>$ 0</b><b>$ 0</b><b>$ 0</b><b>$ 0</b><b>$ 0</b></span></div>

<div class="abs" style="left:0;top:95px;width:6px;height:6px;border:1px solid #777;border-radius:1px;font-size:5px;line-height:4px;text-align:center">−</div>
<div class="abs" style="left:0;top:296px;width:6px;height:6px;border:1px solid #777;border-radius:1px;font-size:5px;line-height:4px;text-align:center">−</div>
<div class="abs" style="left:0;top:486px;width:6px;height:6px;border:1px solid #777;border-radius:1px;font-size:5px;line-height:4px;text-align:center">−</div>
<div class="abs" style="left:3px;top:102px;width:1px;height:190px;background:#aaa"></div>
<div class="abs" style="left:3px;top:303px;width:1px;height:180px;background:#aaa"></div>
<div class="abs" style="left:23px;top:57px;width:6px;height:7px;border:1px solid #1a73e8"></div>
<div class="abs" style="left:191px;top:49px;width:2px;height:489px;background:#c4c4c4"></div>
<div class="abs" style="left:193px;top:535px;width:355px;height:3px;background:#dadada;border-radius:2px"></div>
<div class="abs" style="left:979px;top:88px;width:3px;height:12px;background:#dadada;border-radius:2px"></div>
<div class="abs tabbar"><span style="position:absolute;left:16px;font-size:8px">+</span><span style="position:absolute;left:30px">☰</span><span style="position:absolute;left:48px">Assumptions ▾</span><span style="position:absolute;left:92px;top:1px;height:15px;line-height:14px;padding:0 5px;background:#e1e9f7;color:#0b57d0;font-weight:bold">Financials ▾</span></div>
</body></html>
